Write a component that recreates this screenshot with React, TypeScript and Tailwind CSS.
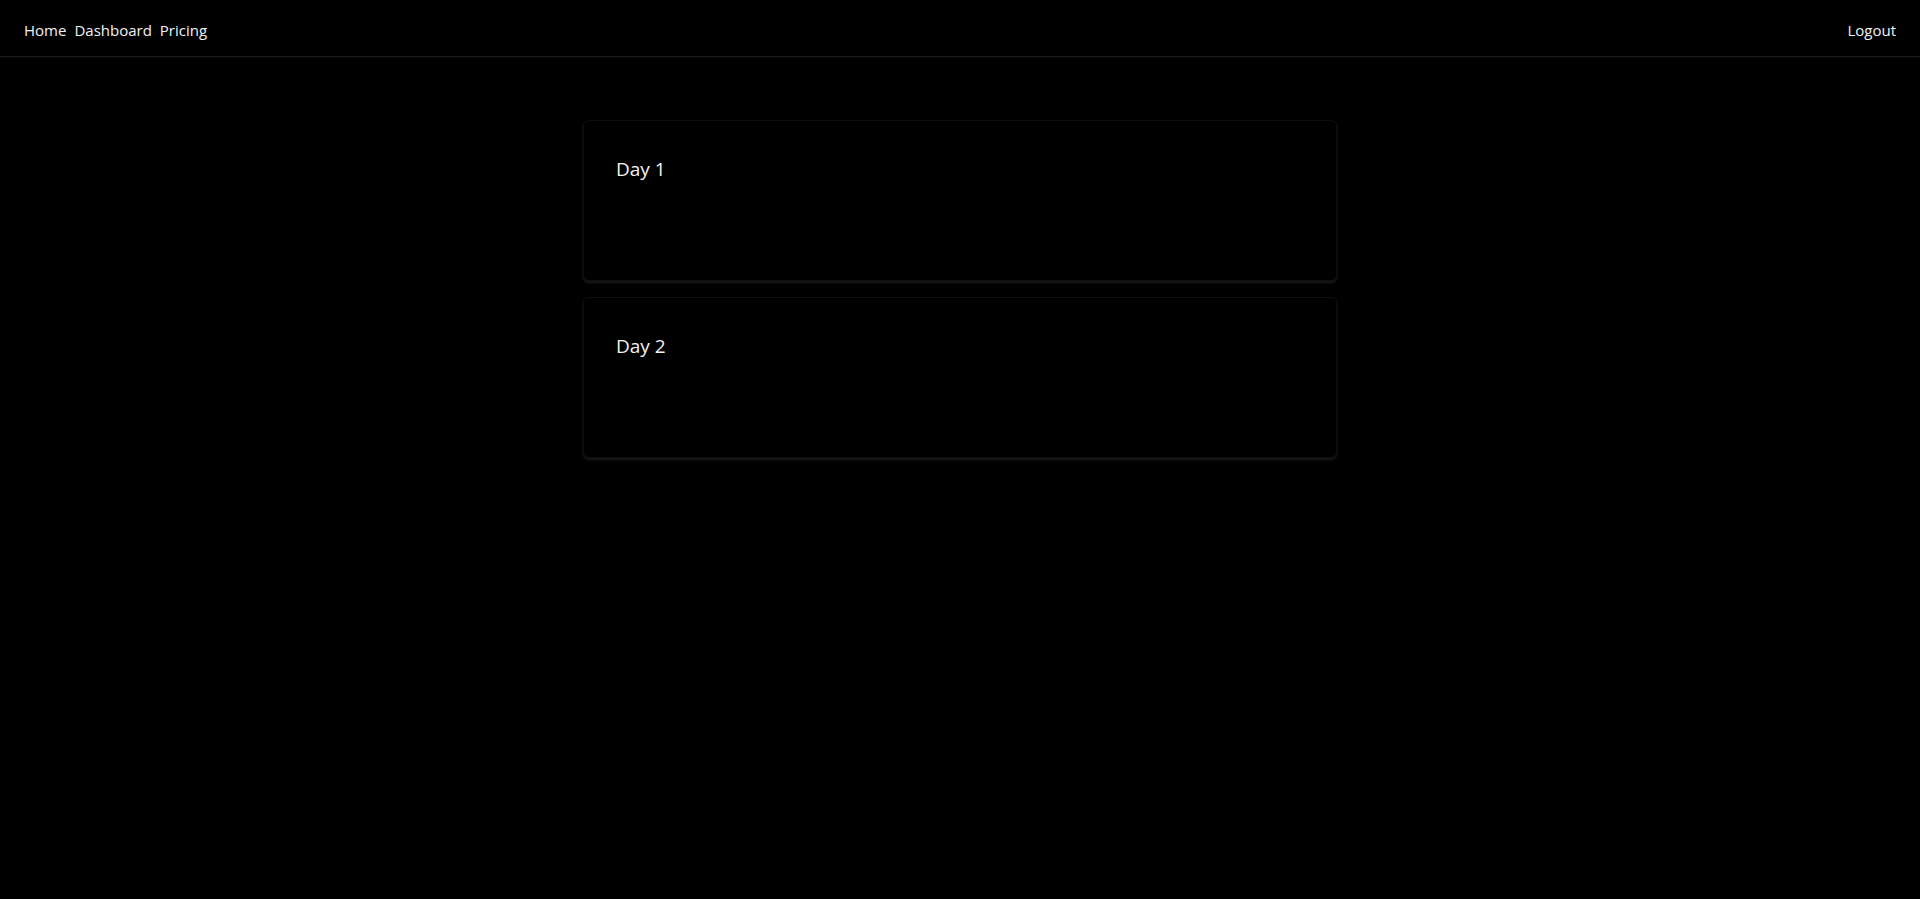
export default function App() {
  const days = ["Day 1", "Day 2"];

  return (
    <div className="min-h-screen bg-black text-[#f2f2f2] font-['Open_Sans',sans-serif]">
      <nav className="flex h-[57px] items-center justify-between border-b border-[#1c1c1c] px-6 pt-1 text-[15px]">
        <div className="flex items-center gap-2">
          <a>Home</a>
          <a>Dashboard</a>
          <a>Pricing</a>
        </div>
        <a>Logout</a>
      </nav>

      <main className="mx-auto mt-[63px] flex w-[754px] flex-col gap-4">
        {days.map((day) => (
          <div
            key={day}
            className="h-[161px] rounded-md border border-[#0e0e0e] bg-black px-8 pt-[34px] shadow-[0_2px_3px_rgba(255,255,255,0.1)]"
          >
            <h2 className="text-[19px] leading-7">{day}</h2>
          </div>
        ))}
      </main>
    </div>
  );
}
